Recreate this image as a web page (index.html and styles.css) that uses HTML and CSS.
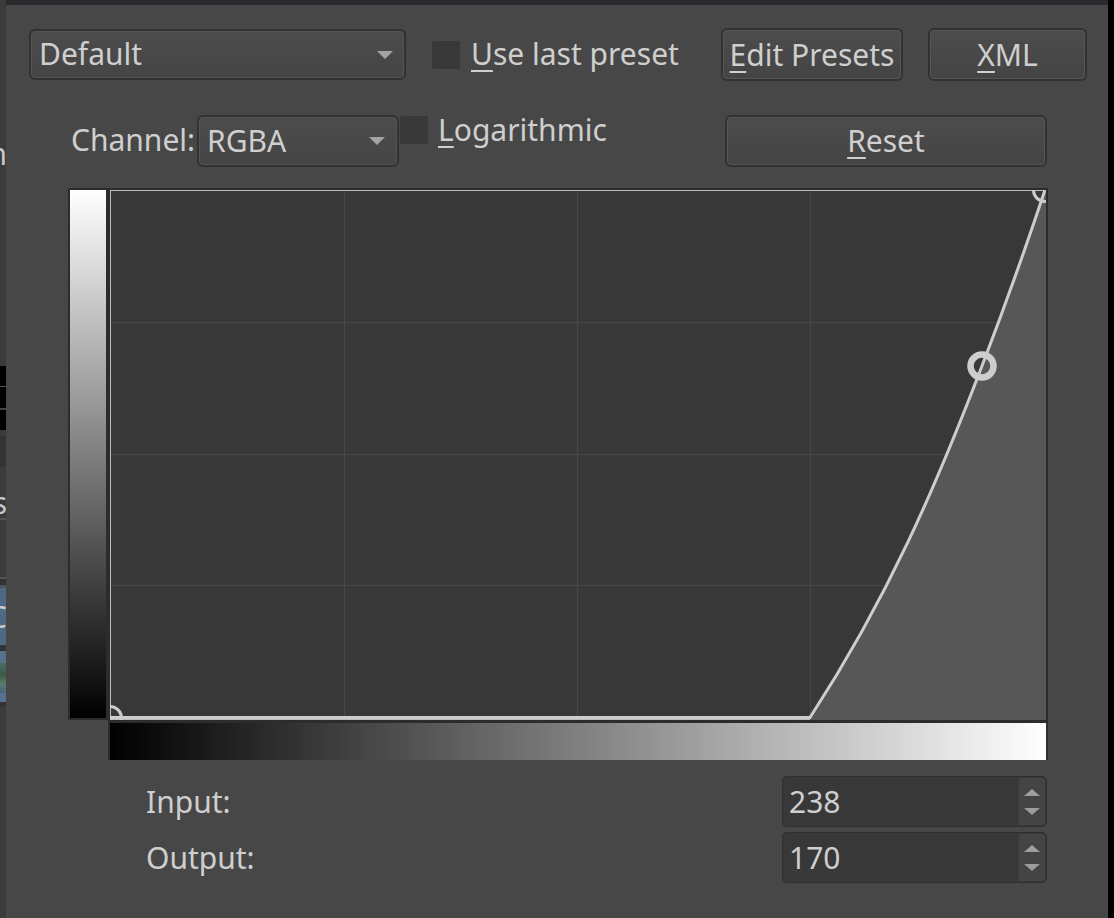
FILE: index.html
```html
<!DOCTYPE html>
<html>
<head>
<meta charset="utf-8">
<title>Curves</title>
<link rel="stylesheet" href="styles.css">
</head>
<body>
<div class="screen">
  <div class="side">
    <div class="s-blk h140"></div>
    <div class="s-frag h28"><span>n</span></div>
    <div class="s-blk h198"></div>
    <div class="s-black h20"></div>
    <div class="s-line h1"></div>
    <div class="s-black h21"></div>
    <div class="s-gap h2"></div>
    <div class="s-black h20"></div>
    <div class="s-blk h6"></div>
    <div class="s-dark h31"></div>
    <div class="s-blk h23"></div>
    <div class="s-frag h25"><span>s</span></div>
    <div class="s-blk h3"></div>
    <div class="s-line h2"></div>
    <div class="s-blk h57"></div>
    <div class="s-line h2"></div>
    <div class="s-dark h6"></div>
    <div class="s-line h3"></div>
    <div class="s-frag s-blue h57"><span>C</span></div>
    <div class="s-dark h6"></div>
    <div class="s-blue2 h12"></div>
    <div class="s-img h30"></div>
    <div class="s-blue2 h9"></div>
    <div class="s-dark h5"></div>
    <div class="s-blk grow"></div>
  </div>

  <div class="panel">
    <div class="topbar"></div>

    <div class="row row1">
      <div class="combo combo-preset"><span class="combo-text">Default</span><span class="arrow"></span></div>
      <div class="check check-last"><span class="box"></span><span class="check-text"><u>U</u>se last preset</span></div>
      <button class="btn btn-edit"><u>E</u>dit Presets</button>
      <button class="btn btn-xml"><u>X</u>ML</button>
    </div>

    <div class="row row2">
      <span class="chan-label">Channel:</span>
      <div class="combo combo-chan"><span class="combo-text">RGBA</span><span class="arrow"></span></div>
      <div class="check check-log"><span class="box"></span><span class="check-text"><u>L</u>ogarithmic</span></div>
      <button class="btn btn-reset"><u>R</u>eset</button>
    </div>

    <div class="curves">
      <div class="vbar"></div>
      <svg class="graph" width="940" height="532" viewBox="0 0 940 532">
        <defs>
          <clipPath id="inner"><rect x="2" y="2" width="936" height="530"/></clipPath>
        </defs>
        <rect width="940" height="532" fill="#2c2c2c"/>
        <rect x="2.5" y="2.5" width="935" height="529" fill="#383838" stroke="#bdbdbd" stroke-width="1"/>
        <g stroke="#474747" stroke-width="1.2">
          <line x1="236.5" y1="3" x2="236.5" y2="531"/>
          <line x1="469.5" y1="3" x2="469.5" y2="531"/>
          <line x1="702.5" y1="3" x2="702.5" y2="531"/>
          <line x1="3" y1="134.5" x2="937" y2="134.5"/>
          <line x1="3" y1="266.5" x2="937" y2="266.5"/>
          <line x1="3" y1="397.5" x2="937" y2="397.5"/>
        </g>
        <g clip-path="url(#inner)">
          <path d="M702,530 C780,410 828,298 874,178 C897,118 917,62 937,2 L938,2 L938,532 L702,532 Z" fill="#575757"/>
          <path d="M2,529.5 L702,529.5 C780,410 828,298 874,178 C897,118 917,62 937,2" fill="none" stroke="#cdcdcd" stroke-width="3"/>
          <circle cx="2" cy="530" r="11.5" fill="none" stroke="#cdcdcd" stroke-width="3"/>
          <circle cx="937" cy="2" r="11.5" fill="none" stroke="#cdcdcd" stroke-width="3"/>
          <circle cx="874" cy="178" r="11.5" fill="none" stroke="#cdcdcd" stroke-width="6.5"/>
        </g>
      </svg>
      <div class="corner"></div>
      <div class="hbar"></div>
    </div>

    <div class="io">
      <div class="io-row">
        <span class="io-label">Input:</span>
        <div class="spin"><span class="spin-val">238</span><div class="spin-btns"><span class="tri-up"></span><span class="tri-down"></span></div></div>
      </div>
      <div class="io-row">
        <span class="io-label">Output:</span>
        <div class="spin"><span class="spin-val">170</span><div class="spin-btns"><span class="tri-up"></span><span class="tri-down"></span></div></div>
      </div>
    </div>
  </div>

  <div class="edge"></div>
</div>
</body>
</html>
```

FILE: styles.css
```css
* { box-sizing: border-box; }

body {
  margin: 0;
  background: #474747;
  font-family: "Noto Sans", "DejaVu Sans", sans-serif;
  font-size: 30px;
  color: #cfcfcf;
}

.screen {
  display: flex;
  width: 1114px;
  height: 918px;
  overflow: hidden;
}

/* left strip: fragment of neighbouring window */
.side {
  width: 6px;
  display: flex;
  flex-direction: column;
  background: #3b3b3b;
  overflow: hidden;
}
.side > div { flex: none; }
.side .grow { flex: 1; }
.s-blk { background: #3b3b3b; }
.s-black { background: #000; }
.s-line { background: #555; }
.s-gap { background: #444; }
.s-dark { background: #333; }
.s-blue { background: #4e6984; }
.s-blue2 { background: #56728e; }
.s-img { background: linear-gradient(180deg, #4a6a62 0%, #3d5a48 40%, #5d7a6a 70%, #46667e 100%); }
.s-frag {
  display: flex;
  justify-content: flex-end;
  align-items: center;
  overflow: hidden;
  line-height: 1;
  color: #c8c8c8;
  font-size: 30px;
}
.s-frag span { flex: none; margin-right: -1px; }
.h1 { height: 1px; } .h2 { height: 2px; } .h3 { height: 3px; } .h5 { height: 5px; }
.h6 { height: 6px; } .h9 { height: 9px; } .h12 { height: 12px; } .h20 { height: 20px; }
.h21 { height: 21px; } .h23 { height: 23px; } .h25 { height: 25px; } .h28 { height: 28px; }
.h30 { height: 30px; } .h31 { height: 31px; } .h57 { height: 57px; } .h140 { height: 140px; }
.h198 { height: 198px; }

.panel {
  width: 1102px;
  background: #474747;
  display: flex;
  flex-direction: column;
}

.edge { width: 6px; background: #000; }

.topbar { height: 5px; background: #2a2a2e; }

u {
  text-decoration: underline;
  text-decoration-thickness: 2px;
  text-underline-offset: 5px;
}

.row {
  display: flex;
  align-items: center;
}

/* combo boxes */
.combo {
  display: flex;
  align-items: center;
  justify-content: space-between;
  border: 2px solid #323232;
  border-radius: 6px;
  background: linear-gradient(180deg, #4c4c4c, #454545);
  box-shadow: inset 0 0 0 1px #545454;
  padding: 0 11px 0 8px;
  line-height: 30px;
}
.combo-text { padding-bottom: 1px; }
.arrow {
  width: 0;
  height: 0;
  border-left: 8px solid transparent;
  border-right: 8px solid transparent;
  border-top: 8px solid #a3a3a3;
}

/* buttons */
.btn {
  font: inherit;
  color: inherit;
  padding: 0;
  margin: 0;
  line-height: 30px;
  border: 2px solid #323232;
  border-radius: 6px;
  background: linear-gradient(180deg, #4c4c4c, #444444);
  box-shadow: inset 0 0 0 1px #565656;
  text-align: center;
}

/* checkboxes */
.check { display: flex; }
.box {
  flex: none;
  width: 28px;
  height: 28px;
  background: #383838;
  border-radius: 2px;
}
.check-text { line-height: 30px; }

/* row 1 */
.row1 {
  margin-top: 23px;
  padding-left: 23px;
  height: 53px;
}
.combo-preset { width: 377px; height: 51px; }
.check-last {
  margin-left: 26px;
  width: 289px;
  align-items: center;
}
.check-last .check-text { margin-left: 11px; padding-bottom: 2px; }
.btn-edit { width: 182px; height: 53px; }
.btn-xml { width: 159px; height: 53px; margin-left: 25px; }

/* row 2 */
.row2 {
  margin-top: 34px;
  height: 52px;
}
.chan-label {
  margin-left: 65px;
  width: 126px;
  line-height: 30px;
  padding-bottom: 2px;
}
.combo-chan { width: 202px; height: 52px; padding-right: 12px; }
.check-log {
  align-self: flex-start;
  margin-left: 1px;
  width: 325px;
  align-items: flex-start;
}
.check-log .box { margin-top: 1px; }
.check-log .check-text { margin-left: 10px; }
.btn-reset { width: 322px; height: 52px; }

/* curve widget */
.curves {
  margin-top: 21px;
  margin-left: 62px;
  display: grid;
  grid-template-columns: 40px 940px;
  grid-template-rows: 532px 40px;
}
.vbar {
  border: 2px solid #2c2c2c;
  background: linear-gradient(180deg, #ffffff, #000000);
}
.graph { display: block; }
.hbar {
  border-top: 3px solid #2c2c2c;
  border-left: 2px solid #2c2c2c;
  border-right: 2px solid #2f2f2f;
  background: linear-gradient(90deg, #000000, #ffffff);
}

/* input / output */
.io {
  margin-top: 16px;
  display: flex;
  flex-direction: column;
  gap: 5px;
}
.io-row {
  display: flex;
  align-items: center;
  height: 51px;
}
.io-label {
  margin-left: 140px;
  width: 636px;
  line-height: 30px;
}
.spin {
  width: 265px;
  height: 51px;
  display: flex;
  align-items: stretch;
  border: 1px solid #2f2f2f;
  border-radius: 5px;
  background: #383838;
  overflow: hidden;
}
.spin-val {
  flex: 1;
  padding-left: 6px;
  line-height: 49px;
}
.spin-btns {
  width: 27px;
  margin: 1px 1px 1px 0;
  background: #444;
  border-left: 1px solid #3c3c3c;
  border-radius: 0 4px 4px 0;
  display: flex;
  flex-direction: column;
  align-items: center;
  justify-content: center;
  gap: 12px;
}
.tri-up {
  width: 0; height: 0;
  border-left: 8px solid transparent;
  border-right: 8px solid transparent;
  border-bottom: 7px solid #9c9c9c;
}
.tri-down {
  width: 0; height: 0;
  border-left: 8px solid transparent;
  border-right: 8px solid transparent;
  border-top: 7px solid #9c9c9c;
}
```
